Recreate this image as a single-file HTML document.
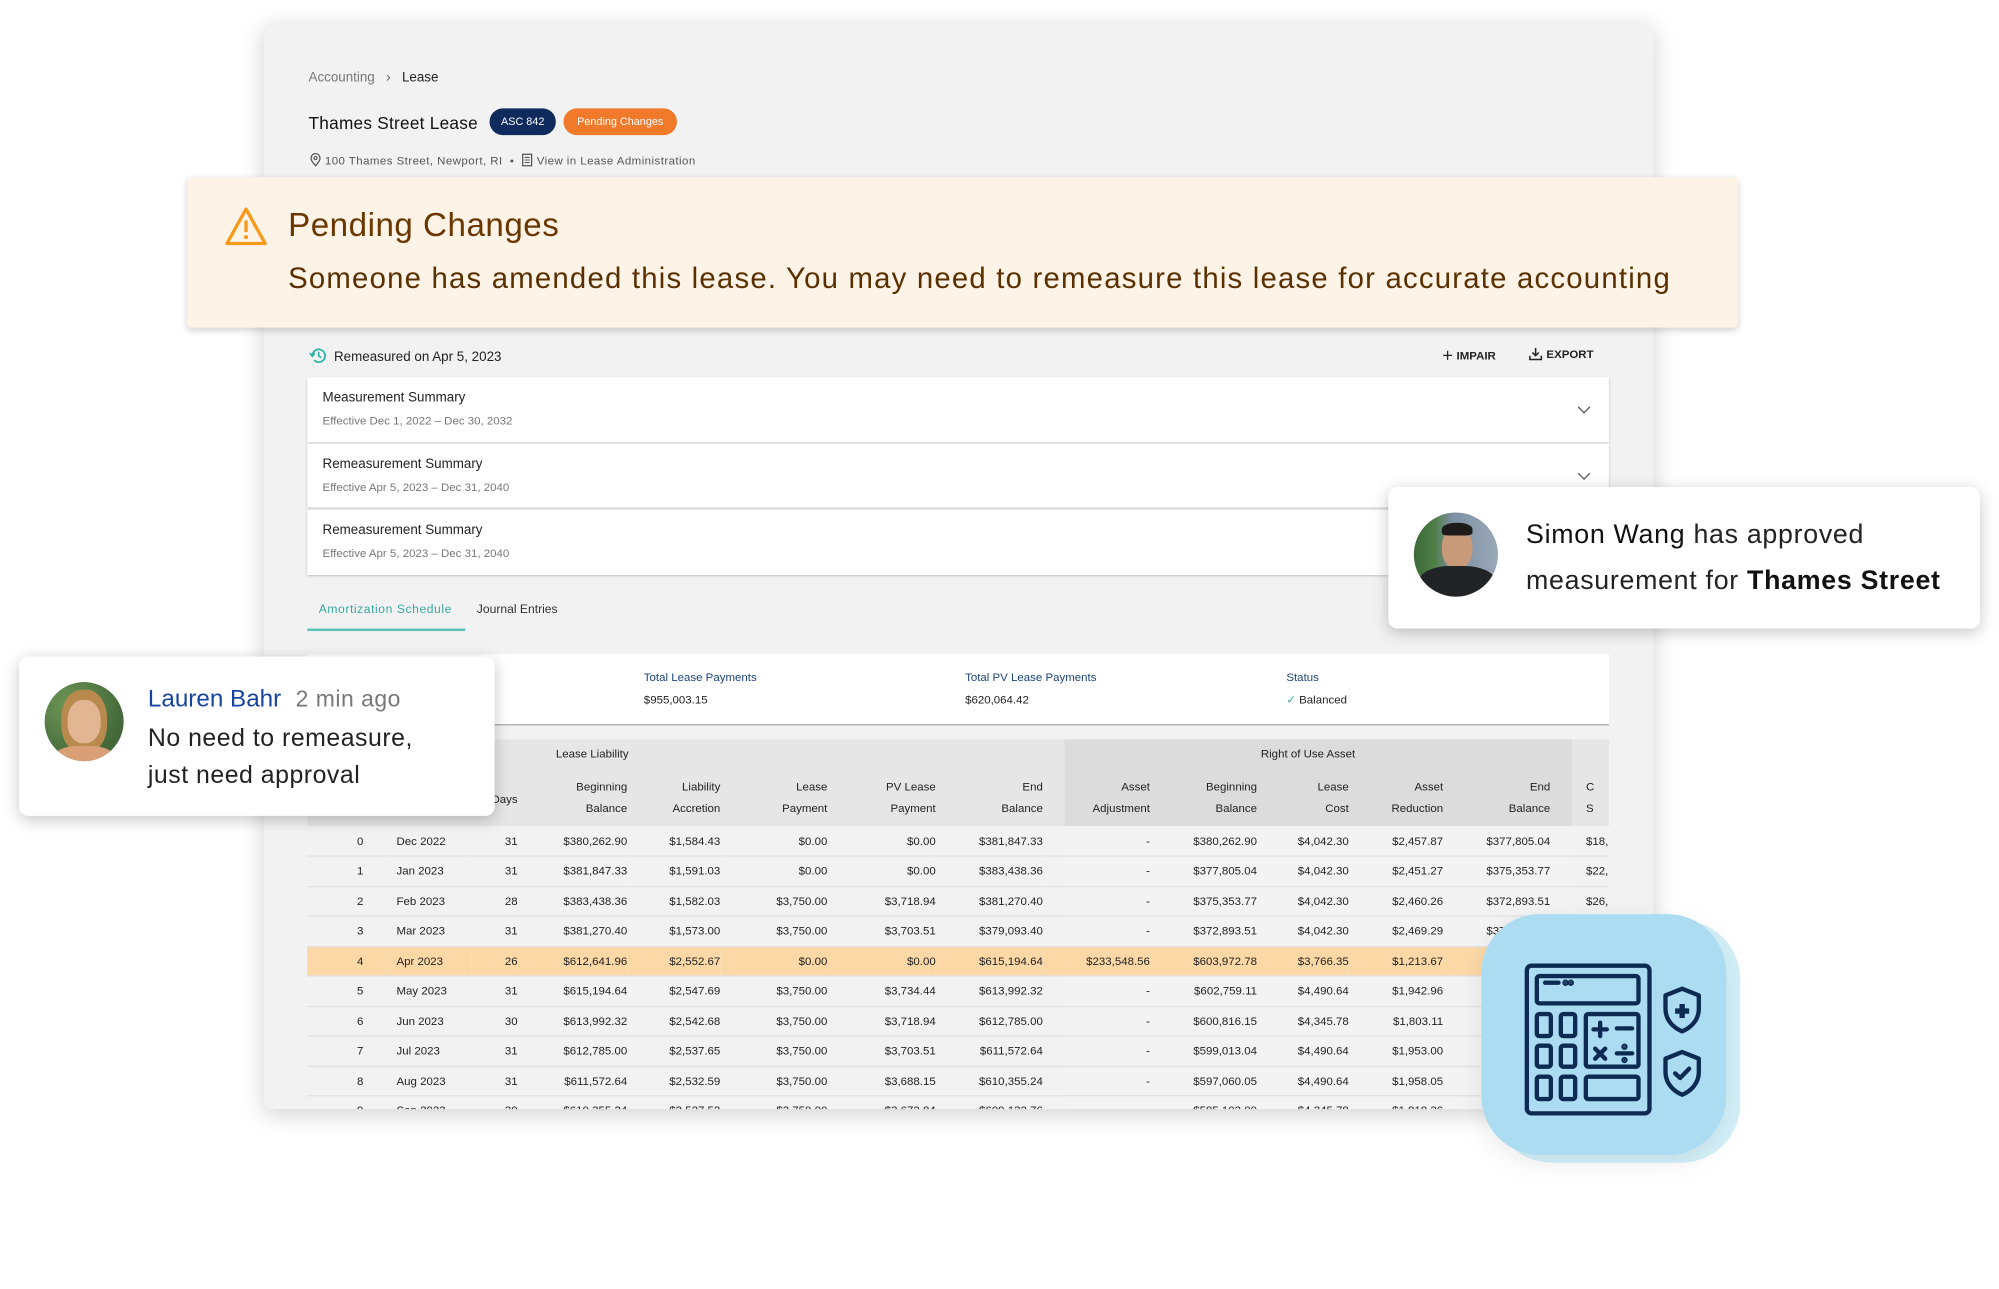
<!DOCTYPE html>
<html><head><meta charset="utf-8"><style>
*{margin:0;padding:0;box-sizing:border-box}
html,body{width:1999px;height:1288px;overflow:hidden;background:#fff;font-family:"Liberation Sans",sans-serif}
#w{position:absolute;left:0;top:0;width:1568px;height:1011px;transform:scale(1.27487);transform-origin:0 0}
.a{position:absolute;white-space:nowrap}
#panel{position:absolute;left:207px;top:18px;width:1090px;height:852px;background:#f2f2f2;border-radius:6px;box-shadow:0 4px 18px rgba(0,0,0,.18);overflow:hidden}
.acc{position:absolute;left:34px;width:1021px;background:#fff;box-shadow:0 1px 2px rgba(0,0,0,.2)}
.acc .t{position:absolute;left:12px;top:10px;font-size:10.5px;color:#222}
.acc .s{position:absolute;left:12px;top:29px;font-size:9px;color:#777}
.chev{position:absolute;right:16px;top:20px;width:7px;height:7px;border-right:1.3px solid #555;border-bottom:1.3px solid #555;transform:rotate(45deg)}
table{border-collapse:collapse;table-layout:fixed;position:absolute;left:34px;top:630px;width:1021px;font-size:9px;color:#222}
td{height:23.5px;text-align:right;border-bottom:1px solid #e2e2e2;white-space:nowrap;overflow:hidden;padding:0}
td:nth-child(1){text-align:right;padding-right:20px}
td:nth-child(2){text-align:left;padding-left:6px}
td:nth-child(14){text-align:left;padding-left:28px}
tr.hl td{background:#fbd8a6}
.hd{position:absolute;font-size:9px;color:#222;text-align:right;line-height:17px}
.card{position:absolute;background:#fff;border-radius:7px;box-shadow:0 3px 12px rgba(0,0,0,.22)}
</style></head><body><div id="w">
<div id="panel">
<div class="a" style="left:35px;top:37px;font-size:10.5px;color:#777">Accounting <span style="margin:0 6px;color:#555">›</span> <span style="color:#222">Lease</span></div>
<div class="a" style="left:35px;top:71px;font-size:13.5px;color:#111;font-weight:500;letter-spacing:.2px">Thames Street Lease</div>
<div class="a" style="left:177px;top:67px;width:52px;height:21px;border-radius:11px;background:#0f2a5c;color:#fff;font-size:8.5px;line-height:21px;text-align:center">ASC 842</div>
<div class="a" style="left:235px;top:67px;width:89px;height:21px;border-radius:11px;background:#f07a2a;color:#fff;font-size:8.5px;line-height:21px;text-align:center">Pending Changes</div>
<div class="a" style="left:36px;top:102px;font-size:9px;color:#555;letter-spacing:.35px"><svg width="9" height="11" viewBox="0 0 9 11" style="vertical-align:-2px"><path d="M4.5 10C1.5 6.5 1 5.5 1 4a3.5 3.5 0 0 1 7 0c0 1.5-.5 2.5-3.5 6z" fill="none" stroke="#555" stroke-width="1"/><circle cx="4.5" cy="4" r="1.2" fill="none" stroke="#555" stroke-width=".9"/></svg> 100 Thames Street, Newport, RI &nbsp;•&nbsp; <svg width="9" height="11" viewBox="0 0 9 11" style="vertical-align:-2px"><rect x="1" y="1" width="7" height="9" fill="none" stroke="#555"/><path d="M2.5 3.5h4M2.5 5.5h4M2.5 7.5h4" stroke="#555" stroke-width=".8"/></svg> View in Lease Administration</div>

<div class="a" style="left:35px;top:254px;font-size:10.5px;color:#222"><svg width="15" height="14" viewBox="0 0 15 14" style="vertical-align:-3px;margin-right:5px"><path d="M3 7a5 5 0 1 1 1.5 3.6" fill="none" stroke="#2fb3a8" stroke-width="1.4"/><path d="M1 5l2 2.5L5 5" fill="none" stroke="#2fb3a8" stroke-width="1.3"/><path d="M8 4v3.3l2 1.3" fill="none" stroke="#2fb3a8" stroke-width="1.3"/></svg>Remeasured on Apr 5, 2023</div>
<div class="a" style="left:924px;top:254px;font-size:9px;color:#222;font-weight:bold">＋ IMPAIR</div>
<div class="a" style="left:992px;top:254px;font-size:9px;color:#222;font-weight:bold"><svg width="11" height="11" viewBox="0 0 11 11" style="vertical-align:-2px;margin-right:3px"><path d="M5.5 1v6M3 4.5l2.5 2.5L8 4.5M1 7v3h9V7" fill="none" stroke="#222" stroke-width="1.2"/></svg>EXPORT</div>

<div class="acc" style="top:278px;height:51px"><div class="t">Measurement Summary</div><div class="s">Effective Dec 1, 2022 – Dec 30, 2032</div><div class="chev"></div></div>
<div class="acc" style="top:330px;height:50px"><div class="t">Remeasurement Summary</div><div class="s">Effective Apr 5, 2023 – Dec 31, 2040</div><div class="chev"></div></div>
<div class="acc" style="top:382px;height:51px"><div class="t">Remeasurement Summary</div><div class="s">Effective Apr 5, 2023 – Dec 31, 2040</div><div class="chev"></div></div>

<div class="a" style="left:43px;top:455px;font-size:9.5px;color:#3aa89f;font-weight:500;letter-spacing:.45px">Amortization Schedule</div>
<div class="a" style="left:34px;top:475px;width:124px;height:2px;background:#5cc4b8"></div>
<div class="a" style="left:167px;top:455px;font-size:9.5px;color:#333">Journal Entries</div>

<div class="a" style="left:34px;top:495px;width:1021px;height:56px;background:#fff;border-bottom:1.5px solid #aaa"></div>
<div class="a" style="left:298px;top:508px;font-size:9px;color:#1d4478">Total Lease Payments</div>
<div class="a" style="left:298px;top:526px;font-size:9px;color:#222">$955,003.15</div>
<div class="a" style="left:550px;top:508px;font-size:9px;color:#1d4478">Total PV Lease Payments</div>
<div class="a" style="left:550px;top:526px;font-size:9px;color:#222">$620,064.42</div>
<div class="a" style="left:802px;top:508px;font-size:9px;color:#1d4478">Status</div>
<div class="a" style="left:802px;top:526px;font-size:9px;color:#222"><span style="color:#3aa89f">✓</span> Balanced</div>

<div class="a" style="left:34px;top:562px;width:1021px;height:68px;background:#e6e6e6"></div>
<div class="a" style="left:628px;top:562px;width:398px;height:68px;background:#dcdcdc"></div>
<div class="a" style="left:628px;top:630px;width:398px;height:230px;background:#f3f3f3"></div>
<div class="a" style="left:229px;top:568px;font-size:9px;color:#222">Lease Liability</div>
<div class="a" style="left:782px;top:568px;font-size:9px;color:#222">Right of Use Asset</div>
<div class="hd" style="left:150px;top:601px;width:49px">Days</div>
<div class="hd" style="left:200px;top:591px;width:85px">Beginning<br>Balance</div>
<div class="hd" style="left:270px;top:591px;width:88px">Liability<br>Accretion</div>
<div class="hd" style="left:350px;top:591px;width:92px">Lease<br>Payment</div>
<div class="hd" style="left:440px;top:591px;width:87px">PV Lease<br>Payment</div>
<div class="hd" style="left:520px;top:591px;width:91px">End<br>Balance</div>
<div class="hd" style="left:600px;top:591px;width:95px">Asset<br>Adjustment</div>
<div class="hd" style="left:690px;top:591px;width:89px">Beginning<br>Balance</div>
<div class="hd" style="left:770px;top:591px;width:81px">Lease<br>Cost</div>
<div class="hd" style="left:840px;top:591px;width:85px">Asset<br>Reduction</div>
<div class="hd" style="left:920px;top:591px;width:89px">End<br>Balance</div>
<div class="hd" style="left:1037px;top:591px;width:30px;text-align:left">C<br>S</div>

<table>
<colgroup><col style="width:64px"><col style="width:65px"><col style="width:36px"><col style="width:86px"><col style="width:73px"><col style="width:84px"><col style="width:85px"><col style="width:84px"><col style="width:84px"><col style="width:84px"><col style="width:72px"><col style="width:74px"><col style="width:84px"><col style="width:46px"></colgroup>
<tr><td>0</td><td>Dec 2022</td><td>31</td><td>$380,262.90</td><td>$1,584.43</td><td>$0.00</td><td>$0.00</td><td>$381,847.33</td><td>-</td><td>$380,262.90</td><td>$4,042.30</td><td>$2,457.87</td><td>$377,805.04</td><td>$18,</td></tr>
<tr><td>1</td><td>Jan 2023</td><td>31</td><td>$381,847.33</td><td>$1,591.03</td><td>$0.00</td><td>$0.00</td><td>$383,438.36</td><td>-</td><td>$377,805.04</td><td>$4,042.30</td><td>$2,451.27</td><td>$375,353.77</td><td>$22,</td></tr>
<tr><td>2</td><td>Feb 2023</td><td>28</td><td>$383,438.36</td><td>$1,582.03</td><td>$3,750.00</td><td>$3,718.94</td><td>$381,270.40</td><td>-</td><td>$375,353.77</td><td>$4,042.30</td><td>$2,460.26</td><td>$372,893.51</td><td>$26,</td></tr>
<tr><td>3</td><td>Mar 2023</td><td>31</td><td>$381,270.40</td><td>$1,573.00</td><td>$3,750.00</td><td>$3,703.51</td><td>$379,093.40</td><td>-</td><td>$372,893.51</td><td>$4,042.30</td><td>$2,469.29</td><td>$370,424.22</td><td>$30,</td></tr>
<tr class="hl"><td>4</td><td>Apr 2023</td><td>26</td><td>$612,641.96</td><td>$2,552.67</td><td>$0.00</td><td>$0.00</td><td>$615,194.64</td><td>$233,548.56</td><td>$603,972.78</td><td>$3,766.35</td><td>$1,213.67</td><td>$602,759.11</td><td>$11,</td></tr>
<tr><td>5</td><td>May 2023</td><td>31</td><td>$615,194.64</td><td>$2,547.69</td><td>$3,750.00</td><td>$3,734.44</td><td>$613,992.32</td><td>-</td><td>$602,759.11</td><td>$4,490.64</td><td>$1,942.96</td><td>$600,816.15</td><td>$14,</td></tr>
<tr><td>6</td><td>Jun 2023</td><td>30</td><td>$613,992.32</td><td>$2,542.68</td><td>$3,750.00</td><td>$3,718.94</td><td>$612,785.00</td><td>-</td><td>$600,816.15</td><td>$4,345.78</td><td>$1,803.11</td><td>$599,013.04</td><td>$18,</td></tr>
<tr><td>7</td><td>Jul 2023</td><td>31</td><td>$612,785.00</td><td>$2,537.65</td><td>$3,750.00</td><td>$3,703.51</td><td>$611,572.64</td><td>-</td><td>$599,013.04</td><td>$4,490.64</td><td>$1,953.00</td><td>$597,060.05</td><td>$22,</td></tr>
<tr><td>8</td><td>Aug 2023</td><td>31</td><td>$611,572.64</td><td>$2,532.59</td><td>$3,750.00</td><td>$3,688.15</td><td>$610,355.24</td><td>-</td><td>$597,060.05</td><td>$4,490.64</td><td>$1,958.05</td><td>$595,102.00</td><td>$26,</td></tr>
<tr><td>9</td><td>Sep 2023</td><td>30</td><td>$610,355.24</td><td>$2,527.52</td><td>$3,750.00</td><td>$3,672.84</td><td>$609,132.76</td><td>-</td><td>$595,102.00</td><td>$4,345.78</td><td>$1,818.26</td><td>$593,283.74</td><td>$30,</td></tr>
</table>
</div>

<!-- banner -->
<div class="a" style="left:147px;top:139px;width:1216px;height:118px;background:#fdf3e6;border-radius:3px;box-shadow:0 2px 6px rgba(0,0,0,.18)">
<svg class="a" style="left:29px;top:23px" width="34" height="31" viewBox="0 0 34 31"><path d="M17 2L32 29H2z" fill="none" stroke="#f59a1b" stroke-width="2.6" stroke-linejoin="round"/><path d="M17 11v9" stroke="#f59a1b" stroke-width="2.6"/><circle cx="17" cy="24" r="1.6" fill="#f59a1b"/></svg>
<div class="a" style="left:79px;top:22px;font-size:26px;color:#6a3700;font-weight:500;letter-spacing:.4px">Pending Changes</div>
<div class="a" style="left:79px;top:66px;font-size:23px;color:#5a3000;letter-spacing:.95px">Someone has amended this lease. You may need to remeasure this lease for accurate accounting</div>
</div>

<!-- Simon card -->
<div class="card" style="left:1089px;top:382px;width:464px;height:111px">
<div class="a" style="left:20px;top:20px;width:66px;height:66px;border-radius:50%;overflow:hidden;background:linear-gradient(90deg,#3d6a3a 0,#4f7e46 25%,#7d8fa3 45%,#9aa9b8 100%)">
<div class="a" style="left:22px;top:12px;width:24px;height:32px;border-radius:45%;background:#c99a7a"></div>
<div class="a" style="left:22px;top:8px;width:24px;height:10px;border-radius:50% 50% 20% 20%;background:#1d1a1a"></div>
<div class="a" style="left:4px;top:42px;width:60px;height:30px;border-radius:40% 40% 0 0;background:#222326"></div>
</div>
<div class="a" style="left:108px;top:20px;font-size:21px;color:#222;line-height:36px;letter-spacing:.55px">
<span style="font-weight:500;color:#111">Simon Wang</span> has approved<br>measurement for <span style="font-weight:bold;color:#111">Thames Street</span></div>
</div>

<!-- Lauren card -->
<div class="card" style="left:15px;top:515px;width:373px;height:125px">
<div class="a" style="left:20px;top:20px;width:62px;height:62px;border-radius:50%;overflow:hidden;background:radial-gradient(circle at 30% 30%,#6f9656,#43693a 70%)">
<div class="a" style="left:13px;top:6px;width:36px;height:50px;border-radius:45%;background:#b88a4e"></div>
<div class="a" style="left:18px;top:14px;width:26px;height:34px;border-radius:45%;background:#e2b593"></div>
<div class="a" style="left:8px;top:50px;width:46px;height:20px;border-radius:40% 40% 0 0;background:#d9a077"></div>
</div>
<div class="a" style="left:101px;top:23px;font-size:19px;color:#1844a0;font-weight:500">Lauren Bahr <span style="color:#777;font-weight:normal;font-size:18px;margin-left:6px;letter-spacing:.4px">2 min ago</span></div>
<div class="a" style="left:101px;top:50px;font-size:19.5px;color:#222;line-height:29px;letter-spacing:.4px">No need to remeasure,<br>just need approval</div>
</div>

<!-- calculator tile -->
<div class="a" style="left:1171px;top:722px;width:194px;height:190px;border-radius:46px;background:#d3f0f8"></div>
<div class="a" style="left:1162px;top:717px;width:192px;height:189px;border-radius:46px;background:#acdcf2;box-shadow:0 6px 20px rgba(0,0,0,.08)"></div>
<svg class="a" style="left:1160.9px;top:705.9px" width="204" height="219.6" viewBox="0 0 780 840" fill="none" stroke="#0d2a52" stroke-width="13" stroke-linejoin="round" stroke-linecap="round">
<rect x="140" y="197" width="368" height="443" rx="14"/>
<rect x="170" y="228" width="305" height="82" rx="8"/>
<path d="M195 248h40"/><circle cx="256" cy="248" r="3" fill="#0d2a52"/><circle cx="272" cy="248" r="3" fill="#0d2a52"/>
<rect x="170" y="342" width="42" height="66" rx="7"/><rect x="242" y="342" width="43" height="66" rx="7"/>
<rect x="170" y="437" width="42" height="63" rx="7"/><rect x="242" y="437" width="43" height="63" rx="7"/>
<rect x="170" y="530" width="42" height="67" rx="7"/><rect x="242" y="530" width="43" height="67" rx="7"/>
<rect x="317" y="342" width="158" height="158" rx="7"/>
<rect x="317" y="530" width="158" height="67" rx="7"/>
<path d="M340 388h40M360 368v40M410 385h46M345 446l30 30M375 446l-30 30M410 460h46"/>
<circle cx="433" cy="440" r="3" fill="#0d2a52"/><circle cx="433" cy="480" r="3" fill="#0d2a52"/>
<path d="M606 266l50 20v40c0 35-25 58-50 68c-25-10-50-33-50-68v-40z"/>
<path d="M606 312v42M585 333h42" stroke-width="16" stroke-linecap="butt"/>
<path d="M606 456l50 20v40c0 35-25 58-50 68c-25-10-50-33-50-68v-40z"/>
<path d="M585 520l15 14l27-28"/>
</svg>
</div></body></html>
